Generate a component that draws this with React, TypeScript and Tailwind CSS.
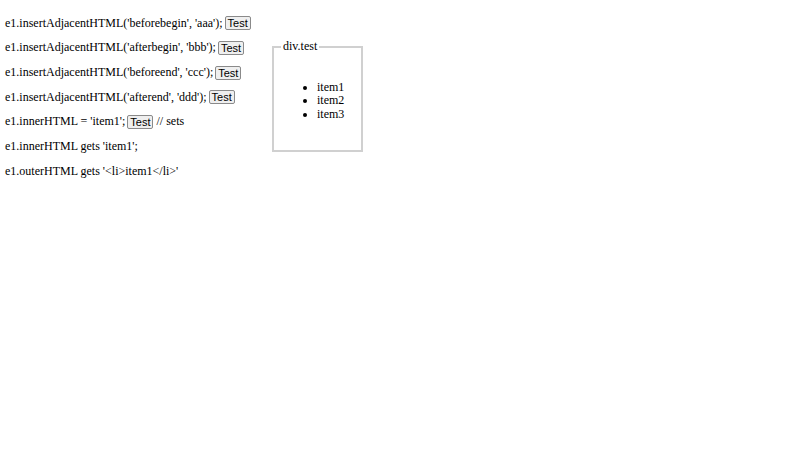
import React from "react";

const rows: { pre: string; post?: string; button?: boolean }[] = [
  { pre: "e1.insertAdjacentHTML('beforebegin', 'aaa');", button: true },
  { pre: "e1.insertAdjacentHTML('afterbegin', 'bbb');", button: true },
  { pre: "e1.insertAdjacentHTML('beforeend', 'ccc');", button: true },
  { pre: "e1.insertAdjacentHTML('afterend', 'ddd');", button: true },
  { pre: "e1.innerHTML = 'item1';", button: true, post: "// sets" },
  { pre: "e1.innerHTML gets 'item1';" },
  { pre: "e1.outerHTML gets '<li>item1</li>'" },
];

const TestButton = () => (
  <button className="ml-[2px] mr-[3px] px-[2px] text-[11px] leading-[12px] font-['Liberation_Sans',sans-serif] text-black bg-[#efefef] border border-[#8a8a8a] rounded-[2px]">
    Test
  </button>
);

const App = () => {
  return (
    <div className="min-h-screen w-full bg-white text-black font-['Liberation_Serif',serif] text-[12px] leading-[13.5px] flex items-start pl-[5px] pt-[11px]">
      <div className="w-[267px] shrink-0 flex flex-col">
        {rows.map((r, i) => (
          <div key={i} className="h-[24.7px] flex items-center whitespace-pre">
            <span>{r.pre}</span>
            {r.button && <TestButton />}
            {r.post && <span>{r.post}</span>}
          </div>
        ))}
      </div>
      <fieldset className="shrink-0 mt-[29px] w-[91px] h-[112px] pl-[3px] border-2 border-[#d0d0d0]">
        <legend className="ml-[4px] px-[2px]">div.test</legend>
        <ul className="list-disc pl-[40px] mt-[27px]">
          <li>item1</li>
          <li>item2</li>
          <li>item3</li>
        </ul>
      </fieldset>
    </div>
  );
};

export default App;
